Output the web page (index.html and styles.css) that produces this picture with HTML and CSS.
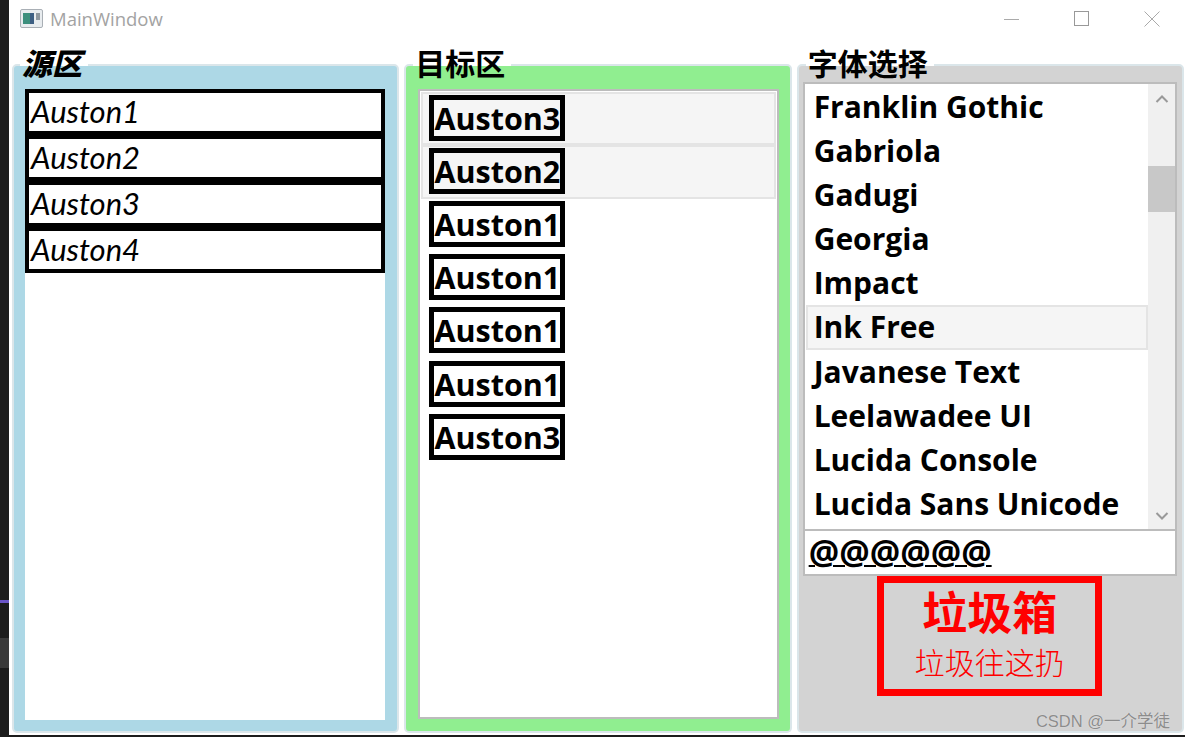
FILE: index.html
```html
<!DOCTYPE html>
<html lang="zh-CN">
<head>
<meta charset="utf-8">
<title>MainWindow</title>
<link rel="stylesheet" href="styles.css">
</head>
<body>
<div class="desktop-strip">
  <div class="strip-a"></div>
  <div class="strip-purple"></div>
  <div class="strip-b"></div>
  <div class="strip-gray"></div>
</div>
<main class="window">
  <header class="titlebar">
    <svg class="app-icon" width="24" height="20" viewBox="0 0 24 20">
      <rect x="0.5" y="0.5" width="22" height="18" rx="1.5" fill="#e8ecef" stroke="#a9afb5"/>
      <rect x="3" y="4" width="7" height="11" fill="#3c8f7d"/>
      <rect x="10" y="4" width="4" height="11" fill="#3d5f83"/>
      <rect x="16" y="4" width="4" height="7" fill="#8f989f"/>
    </svg>
    <span class="title">MainWindow</span>
    <div class="controls">
      <svg width="16" height="16" viewBox="0 0 16 16"><path d="M0 8.5H15" stroke="#aaa" fill="none"/></svg>
      <svg width="16" height="16" viewBox="0 0 16 16"><rect x="0.5" y="0.5" width="14" height="14" stroke="#999" fill="none"/></svg>
      <svg width="16" height="16" viewBox="0 0 16 16"><path d="M0.5 0.5L15.5 15.5M15.5 0.5L0.5 15.5" stroke="#aaa" fill="none"/></svg>
    </div>
  </header>
  <div class="groups">
    <section class="group group-source">
      <h2 class="legend legend-source">源区</h2>
      <ul class="list source-list">
        <li class="source-item">Auston1</li>
        <li class="source-item">Auston2</li>
        <li class="source-item">Auston3</li>
        <li class="source-item">Auston4</li>
      </ul>
    </section>
    <section class="group group-target">
      <h2 class="legend legend-target">目标区</h2>
      <ul class="list target-list">
        <li class="target-row hot"><span class="chip">Auston3</span></li>
        <li class="target-row hot"><span class="chip">Auston2</span></li>
        <li class="target-row"><span class="chip">Auston1</span></li>
        <li class="target-row"><span class="chip">Auston1</span></li>
        <li class="target-row"><span class="chip">Auston1</span></li>
        <li class="target-row"><span class="chip">Auston1</span></li>
        <li class="target-row"><span class="chip">Auston3</span></li>
      </ul>
    </section>
    <section class="group group-font">
      <h2 class="legend legend-font">字体选择</h2>
      <div class="font-box">
        <ul class="list font-list">
          <li class="font-row">Franklin Gothic</li>
          <li class="font-row">Gabriola</li>
          <li class="font-row">Gadugi</li>
          <li class="font-row">Georgia</li>
          <li class="font-row">Impact</li>
          <li class="font-row selected">Ink Free</li>
          <li class="font-row">Javanese Text</li>
          <li class="font-row">Leelawadee UI</li>
          <li class="font-row">Lucida Console</li>
          <li class="font-row">Lucida Sans Unicode</li>
        </ul>
        <div class="scrollbar">
          <svg class="arrow" width="14" height="10" viewBox="0 0 14 10"><path d="M1.5 8L7 2.5L12.5 8" stroke="#999" stroke-width="2" fill="none"/></svg>
          <div class="thumb"></div>
          <svg class="arrow arrow-down" width="14" height="10" viewBox="0 0 14 10"><path d="M1.5 2L7 7.5L12.5 2" stroke="#999" stroke-width="2" fill="none"/></svg>
        </div>
      </div>
      <div class="preview"><span class="preview-text">@@@@@@</span></div>
      <div class="trash">
        <div class="trash-title">垃圾箱</div>
        <div class="trash-sub">垃圾往这扔</div>
      </div>
      <div class="watermark">CSDN @一介学徒</div>
    </section>
  </div>
</main>
</body>
</html>
```

FILE: styles.css
```css
* { box-sizing: border-box; }
html, body { margin: 0; padding: 0; height: 737px; overflow: hidden; }
body {
  display: flex;
  background: #1c1c1c;
  font-family: "Open Sans", "Noto Sans CJK SC", sans-serif;
}
ul { list-style: none; margin: 0; padding: 0; }

.desktop-strip { width: 9px; display: flex; flex-direction: column; }
.strip-a { height: 600px; }
.strip-purple { height: 3px; background: #6a55c8; }
.strip-b { height: 35px; }
.strip-gray { height: 30px; background: #3a3a3a; }

.window { width: 1176px; height: 735px; background: #fff; display: flex; flex-direction: column; }

.titlebar { height: 64px; flex: none; display: flex; align-items: flex-start; padding: 9px 0 0 11px; }
.app-icon { flex: none; }
.title { margin-left: 6px; font: 18.5px/20px "Open Sans", sans-serif; color: #a3a3a3; }
.controls { margin-left: auto; display: flex; gap: 54px; padding: 2px 25px 0 0; }

.groups { flex: 1; display: grid; grid-template-columns: repeat(3, 1fr); gap: 5px; padding: 0 1px 2px 3px; min-height: 0; }
.group { position: relative; display: flex; flex-direction: column; border: 2px solid #dbe6ea; border-radius: 5px; min-height: 0; }
.group-source { background: #add8e6; padding: 23px 12px 11px 11px; }
.group-target { background: #90ee90; padding: 23px 11px 12px 12px; }
.group-font { background: #d3d3d3; padding: 16px 5px 0 4px; }

.legend {
  position: absolute;
  top: -18px;
  height: 18px;
  margin: 0;
  padding: 0 6px 0 2px;
  background: #fff;
  font: 700 30px/28px "Noto Sans CJK SC", sans-serif;
  color: #000;
  white-space: nowrap;
}
.legend-source { left: 6px; font-style: italic; font-weight: 900; }
.legend-target { left: 7px; }
.legend-font { left: 7px; }

.list { background: #fff; }
.source-list { flex: 1; }
.source-item {
  height: 46px;
  border: 4px solid #000;
  padding-left: 2px;
  font: italic 400 31px/36px "Lato", sans-serif;
  color: #000;
  background: #fff;
}

.target-list { flex: 1; border: 2px solid #bcbcbc; padding: 1px; }
.target-row { height: 53.33px; padding: 2px 0 0 8px; }
.target-row.hot { background: #f5f5f5; border: 2px solid #e4e4e4; padding: 1px 0 0 6px; }
.chip {
  display: inline-block;
  width: 136px;
  height: 46px;
  border: 5px solid #000;
  text-align: center;
  font: 700 30.5px/37px "Open Sans", sans-serif;
  color: #000;
}

.font-box { height: 449px; flex: none; display: flex; background: #fff; border: 2px solid #bcbcbc; }
.font-list { flex: 1; padding: 1px 0 1px 1px; }
.font-row {
  height: 44.1px;
  padding-left: 8px;
  font: 700 30px/44px "Open Sans", sans-serif;
  color: #000;
  white-space: nowrap;
}
.font-row.selected { background: #f5f5f5; border: 2px solid #e4e4e4; padding-left: 6px; line-height: 40px; }
.scrollbar { width: 27px; flex: none; position: relative; display: flex; flex-direction: column; align-items: center; background: #f0f0f0; padding-top: 10px; }
.arrow { flex: none; }
.thumb { width: 100%; height: 46px; background: #c8c8c8; margin-top: 62px; }
.arrow-down { margin-top: auto; margin-bottom: 8px; }

.preview { height: 45px; flex: none; background: #fff; border: 2px solid #bcbcbc; border-top: 0; padding-left: 4px; }
.preview-text { font: 700 34px/41px "Open Sans", sans-serif; text-decoration: underline; text-decoration-thickness: 2px; color: #000; }

.trash {
  align-self: center;
  width: 225px;
  height: 120px;
  flex: none;
  border: 7px solid #f00;
  color: #f00;
  text-align: center;
  font-family: "Noto Sans CJK SC", sans-serif;
}
.trash-title { font-size: 45px; font-weight: 700; line-height: 60px; margin-top: -2px; }
.trash-sub { font-size: 30px; font-weight: 300; line-height: 40px; }

.watermark {
  position: absolute;
  right: 12px;
  bottom: -2px;
  font: 16.5px/24px "Liberation Sans", "Noto Sans CJK SC", sans-serif;
  color: #8c8c8c;
  text-shadow: 0 0 1px #eee;
}
```
